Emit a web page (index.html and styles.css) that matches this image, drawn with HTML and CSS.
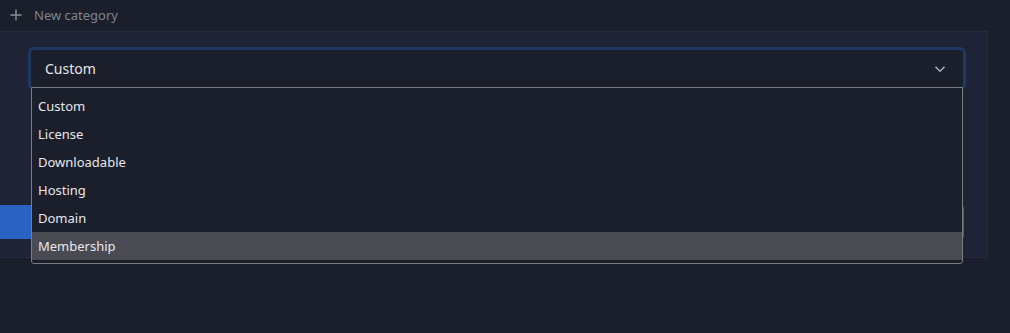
FILE: index.html
```html
<!DOCTYPE html>
<html lang="en">
<head>
    <title>New category</title>
    <meta charset="UTF-8">
    <meta name="viewport" content="width=device-width, initial-scale=1.0">
    <link rel="stylesheet" href="styles.css">
</head>
<body>
    <div class="topbar">
        <svg class="plus" width="12" height="12" viewBox="0 0 12 12">
            <path d="M6 0.5V11.5M0.5 6H11.5" stroke="#8b909a" stroke-width="1.4" fill="none"/>
        </svg>
        <span>New category</span>
    </div>
    <section class="panel">
        <div class="field">
            <div class="select">
                <span>Custom</span>
                <svg class="chevron" width="12" height="8" viewBox="0 0 12 8">
                    <path d="M1.5 1.8L6 6.2L10.5 1.8" stroke="#aab0bb" stroke-width="1.6" fill="none"/>
                </svg>
            </div>
            <ul class="dropdown">
                <li>Custom</li>
                <li>License</li>
                <li>Downloadable</li>
                <li>Hosting</li>
                <li>Domain</li>
                <li class="active">Membership</li>
            </ul>
        </div>
        <button class="save"></button>
    </section>
</body>
</html>
```

FILE: styles.css
```css
html, body {
    min-height: 100vh;
}
body {
    margin: 0;
    padding: 0;
    background-color: #1b1f2c;
    font-family: "Noto Sans", "Open Sans", sans-serif;
    font-size: 13px;
    color: #e6e7ea;
}
.topbar {
    height: 31px;
    box-sizing: border-box;
    display: flex;
    align-items: center;
    gap: 12px;
    padding: 0 0 1px 10px;
    color: #7f848e;
}
.panel {
    width: 988px;
    height: 227px;
    box-sizing: border-box;
    background-color: #1e2335;
    border: 1px solid #252c41;
    border-left: none;
    border-radius: 0 0 4px 0;
}
.field {
    position: relative;
    margin: 15px 0 0 28px;
    width: 938px;
}
.select {
    height: 43px;
    box-sizing: border-box;
    border: 3px solid #1f3962;
    border-radius: 6px;
    background-color: #1b1f2c;
    display: flex;
    align-items: center;
    justify-content: space-between;
    padding: 0 17px 0 14px;
    font-size: 14px;
}
.dropdown {
    position: absolute;
    top: 40px;
    left: 3px;
    width: 932px;
    box-sizing: border-box;
    margin: 0;
    padding: 4px 0 3px 0;
    list-style: none;
    background-color: #1b1f2c;
    border: 1px solid #7b7c82;
    border-radius: 0 0 3px 3px;
    z-index: 10;
}
.dropdown li {
    height: 28px;
    line-height: 28px;
    padding-left: 6px;
}
.dropdown li.active {
    background-color: #4a4a53;
}
.save {
    display: block;
    margin-top: 115px;
    width: 964px;
    height: 34px;
    border: none;
    border-radius: 0 4px 4px 0;
    background-color: #2a62c3;
}
```
